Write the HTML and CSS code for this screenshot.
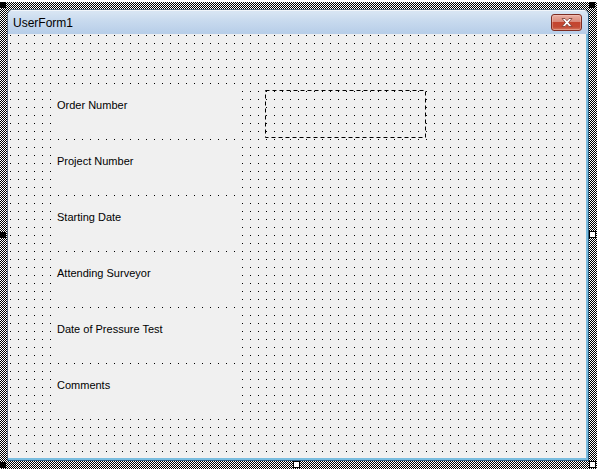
FILE: index.html
```html
<!DOCTYPE html>
<html>
<head>
<meta charset="utf-8">
<link rel="stylesheet" href="styles.css">
</head>
<body>
<div class="frame">
  <div class="window">
    <div class="titlebar">
      <span class="title">UserForm1</span>
      <div class="close">
        <svg width="12" height="9" viewBox="0 0 12 9">
          <path d="M1 0.5 H4 L6 2.8 L8 0.5 H11 L7.6 4.5 L11 8.5 H8 L6 6.2 L4 8.5 H1 L4.4 4.5 Z" fill="#fff" stroke="#7a3a30" stroke-width="0.8" stroke-linejoin="round"/>
        </svg>
      </div>
    </div>
    <div class="client">
      <div class="labels">
        <div class="label">Order Number</div>
        <div class="label">Project Number</div>
        <div class="label">Starting Date</div>
        <div class="label">Attending Surveyor</div>
        <div class="label">Date of Pressure Test</div>
        <div class="label">Comments</div>
      </div>
      <svg class="dashbox" width="161" height="48" viewBox="0 0 161 48">
        <rect x="0.5" y="0.5" width="160" height="47" fill="none" stroke="#000" stroke-width="1" stroke-dasharray="4 3"/>
      </svg>
    </div>
  </div>
  <div class="handle black h-tl"></div>
  <div class="handle black h-tr"></div>
  <div class="handle black h-ml"></div>
  <div class="handle black h-bl"></div>
  <div class="handle white h-mr"></div>
  <div class="handle white h-bm"></div>
  <div class="handle white h-br"></div>
</div>
</body>
</html>
```
FILE: styles.css
```css
html, body {
  margin: 0;
  padding: 0;
  background: #fff;
  width: 597px;
  height: 473px;
  overflow: hidden;
}

.frame {
  position: relative;
  margin-top: 2px;
  height: 467px;
  box-sizing: border-box;
  padding: 7px 8px 8px 7px;
  background: repeating-conic-gradient(#000 0 25%, #fff 0 50%) 0 0 / 2px 2px;
}

.window {
  width: 582px;
  height: 452px;
  box-sizing: border-box;
  display: flex;
  flex-direction: column;
  border: 1px solid #56687a;
  border-right-color: #2d5f82;
  border-bottom-color: #2d5f82;
  border-radius: 6px 6px 0 0;
  background: #f0f0f0;
  overflow: hidden;
}

.titlebar {
  height: 24px;
  flex: none;
  display: flex;
  align-items: center;
  justify-content: space-between;
  padding: 0 6px 0 5px;
  background: linear-gradient(to bottom, #dbe7f4 0%, #c8daee 45%, #b6cde8 100%);
  box-shadow: inset 0 1px 0 rgba(255,255,255,0.6);
}

.title {
  font-family: "Liberation Sans", Arial, sans-serif;
  font-size: 12px;
  color: #000;
  padding-top: 1px;
}

.close {
  width: 31px;
  height: 17px;
  box-sizing: border-box;
  margin-top: 1px;
  border: 1px solid #7d2c22;
  border-radius: 3px;
  display: flex;
  align-items: center;
  justify-content: center;
  background: linear-gradient(to bottom, #eab0a4 0%, #d98a7b 45%, #c4452f 50%, #c24a34 80%, #d77a62 100%);
  box-shadow: inset 0 0 0 1px rgba(255,220,210,0.35);
}

.close svg {
  display: block;
}

.client {
  flex: 1;
  position: relative;
  border-right: 2px solid #79bde0;
  border-bottom: 2px solid #79bde0;
  padding: 54px 0 0 46px;
  background: #f0f0f0;
}

.client::before {
  content: "";
  position: absolute;
  inset: 0;
  background: linear-gradient(to right, #000 0 1px, transparent 1px) 2px 0 / 8px 100% repeat-x;
  -webkit-mask: linear-gradient(to bottom, #000 0 1px, transparent 1px) 0 1px / 100% 8px repeat-y;
  mask: linear-gradient(to bottom, #000 0 1px, transparent 1px) 0 1px / 100% 8px repeat-y;
  pointer-events: none;
}

.labels {
  position: relative;
  z-index: 1;
  display: flex;
  flex-direction: column;
  gap: 10px;
}

.label {
  width: 185px;
  height: 46px;
  box-sizing: border-box;
  padding: 11px 0 0 3px;
  background: #f0f0f0;
  font-family: "Liberation Sans", Arial, sans-serif;
  font-size: 11px;
  line-height: 13px;
  color: #000;
}

.dashbox {
  position: absolute;
  z-index: 1;
  left: 257px;
  top: 56px;
  display: block;
}

.handle {
  position: absolute;
  box-sizing: border-box;
}

.handle.black {
  width: 6px;
  height: 6px;
  background: #000;
}

.handle.white {
  width: 7px;
  height: 7px;
  background: #fff;
  border: 1px solid #000;
}

.h-tl { left: 0; top: 0; }
.h-tr { left: 589px; top: 0; }
.h-ml { left: 0; top: 230px; }
.h-bl { left: 0; top: 460px; }
.h-mr { left: 589px; top: 229px; }
.h-bm { left: 293px; top: 459px; }
.h-br { left: 589px; top: 459px; }
```
